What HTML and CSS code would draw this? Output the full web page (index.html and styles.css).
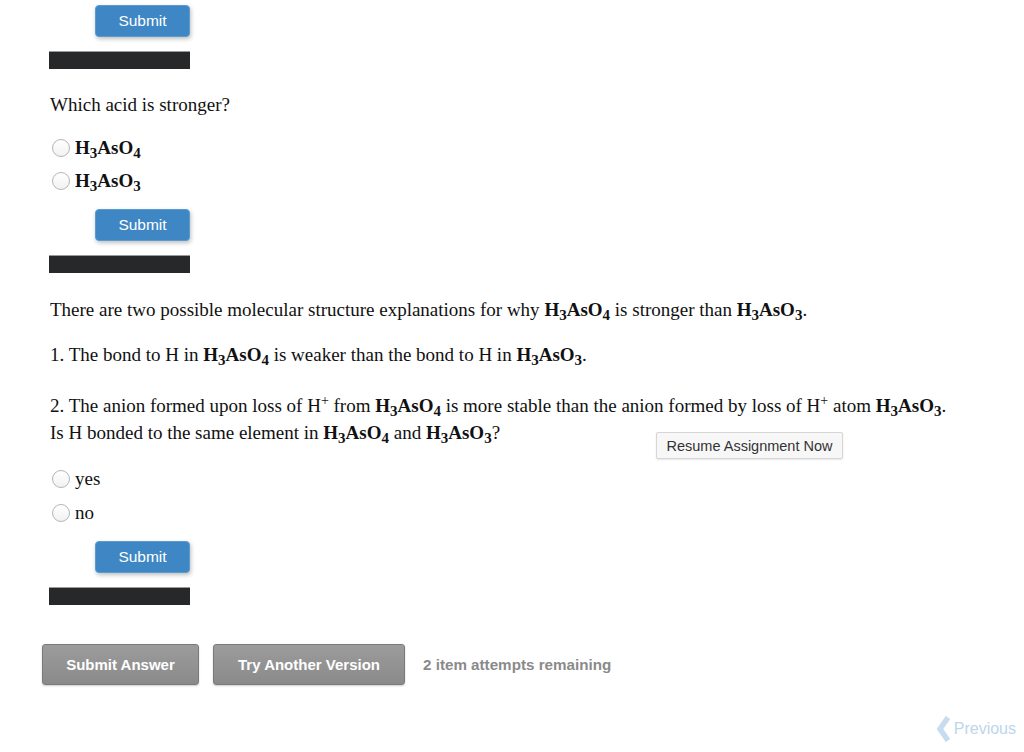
FILE: index.html
```html
<!DOCTYPE html>
<html>
<head>
<meta charset="utf-8">
<link rel="stylesheet" href="styles.css">
</head>
<body>
<div class="page">
  <div class="submit-block first">
    <button class="submit-btn">Submit</button>
    <div class="bar"></div>
  </div>

  <p class="q q-which">Which acid is stronger?</p>
  <div class="options">
    <label class="opt"><span class="radio"></span><b>H<sub>3</sub>AsO<sub>4</sub></b></label>
    <label class="opt"><span class="radio"></span><b>H<sub>3</sub>AsO<sub>3</sub></b></label>
  </div>

  <div class="submit-block">
    <button class="submit-btn">Submit</button>
    <div class="bar"></div>
  </div>

  <p class="q p1">There are two possible molecular structure explanations for why <b>H<sub>3</sub>AsO<sub>4</sub></b> is stronger than <b>H<sub>3</sub>AsO<sub>3</sub></b>.</p>
  <p class="q p2">1. The bond to H in <b>H<sub>3</sub>AsO<sub>4</sub></b> is weaker than the bond to H in <b>H<sub>3</sub>AsO<sub>3</sub></b>.</p>
  <p class="q p3">2. The anion formed upon loss of H<sup>+</sup> from <b>H<sub>3</sub>AsO<sub>4</sub></b> is more stable than the anion formed by loss of H<sup>+</sup> atom <b>H<sub>3</sub>AsO<sub>3</sub></b>.<br>Is H bonded to the same element in <b>H<sub>3</sub>AsO<sub>4</sub></b> and <b>H<sub>3</sub>AsO<sub>3</sub></b>?</p>

  <div class="options options-yn">
    <label class="opt"><span class="radio"></span>yes</label>
    <label class="opt"><span class="radio"></span>no</label>
  </div>

  <div class="submit-block">
    <button class="submit-btn">Submit</button>
    <div class="bar"></div>
  </div>

  <div class="actions">
    <button class="gray-btn btn-answer">Submit Answer</button>
    <button class="gray-btn btn-another">Try Another Version</button>
    <span class="attempts">2 item attempts remaining</span>
  </div>

  <div class="nav">
    <span class="prev"><svg class="chev" width="15" height="26" viewBox="0 0 15 26"><path d="M12 1.5 L4 13 L12 24.5" fill="none" stroke="#c7ddef" stroke-width="5.5" stroke-linejoin="miter"/></svg>Previous</span>
  </div>

  <button class="resume">Resume Assignment Now</button>
</div>
</body>
</html>
```

FILE: styles.css
```css
html, body {
  margin: 0;
  padding: 0;
  background: #ffffff;
}

.page {
  position: relative;
  width: 1024px;
  min-height: 752px;
  font-family: "Liberation Serif", "Times New Roman", serif;
  font-size: 19px;
  color: #111;
}

.submit-block {
  width: 141px;
  margin-left: 49px;
  display: flex;
  flex-direction: column;
  align-items: flex-end;
}

.submit-block.first {
  padding-top: 5px;
}

.submit-btn {
  width: 95px;
  height: 32px;
  background: #3e87c4;
  border: 1px solid #5a9bd0;
  border-radius: 4px;
  color: #fff;
  font-family: "Liberation Sans", Arial, sans-serif;
  font-size: 15.5px;
  box-shadow: 1px 2px 4px rgba(0,0,0,0.25);
  padding: 0;
}

.bar {
  width: 141px;
  height: 18px;
  margin-top: 14px;
  background: #27282a;
  border-top: 1px solid #9a9a9a;
  box-sizing: border-box;
}

.q {
  margin: 0;
  padding-left: 50px;
  line-height: 22px;
}

.q-which {
  margin-top: 25px;
}

sub {
  font-size: 15px;
  vertical-align: -4px;
  line-height: 0;
}

sup {
  font-size: 14px;
  vertical-align: 7px;
  line-height: 0;
}

.options {
  margin-top: 21px;
  display: flex;
  flex-direction: column;
  gap: 11px;
  padding-left: 52px;
}

.options + .submit-block {
  margin-top: 17px;
}

.opt {
  display: flex;
  align-items: center;
  height: 22px;
  gap: 5px;
}

.radio {
  width: 16px;
  height: 16px;
  border: 1px solid #b5b5b5;
  border-radius: 50%;
  background: linear-gradient(#ffffff, #f2f2f2);
  box-sizing: content-box;
}

.p1 {
  margin-top: 26px;
}

.p2 {
  margin-top: 23px;
}

.p3 {
  margin-top: 26px;
  line-height: 27px;
}

.options-yn {
  margin-top: 22px;
  gap: 12px;
}

.options-yn + .submit-block {
  margin-top: 17px;
}

.actions {
  margin-top: 39px;
  padding-left: 42px;
  display: flex;
  align-items: center;
  gap: 14px;
}

.gray-btn {
  height: 41px;
  background: linear-gradient(#9c9c9c, #8a8a8a);
  border: 1px solid #7a7a7a;
  border-radius: 3px;
  color: #fff;
  font-family: "Liberation Sans", Arial, sans-serif;
  font-weight: bold;
  font-size: 15px;
  padding: 0;
  box-shadow: 0 1px 2px rgba(0,0,0,0.2);
}

.btn-answer { width: 157px; }
.btn-another { width: 192px; }

.attempts {
  margin-left: 4px;
  font-family: "Liberation Sans", Arial, sans-serif;
  font-weight: bold;
  font-size: 15.2px;
  color: #8a8a8a;
}

.nav {
  margin-top: 31px;
  display: flex;
  justify-content: flex-end;
  padding-right: 8px;
}

.prev {
  display: flex;
  align-items: center;
  gap: 3px;
  font-family: "Liberation Sans", Arial, sans-serif;
  font-size: 16px;
  color: #bcd6ec;
}

.resume {
  position: absolute;
  left: 656px;
  top: 432px;
  width: 187px;
  height: 27px;
  background: #f7f7f7;
  border: 1px solid #d6d6d6;
  border-radius: 2px;
  font-family: "Liberation Sans", Arial, sans-serif;
  font-size: 14.5px;
  color: #333;
  padding: 0;
  box-shadow: 0 1px 2px rgba(0,0,0,0.1);
}
```
